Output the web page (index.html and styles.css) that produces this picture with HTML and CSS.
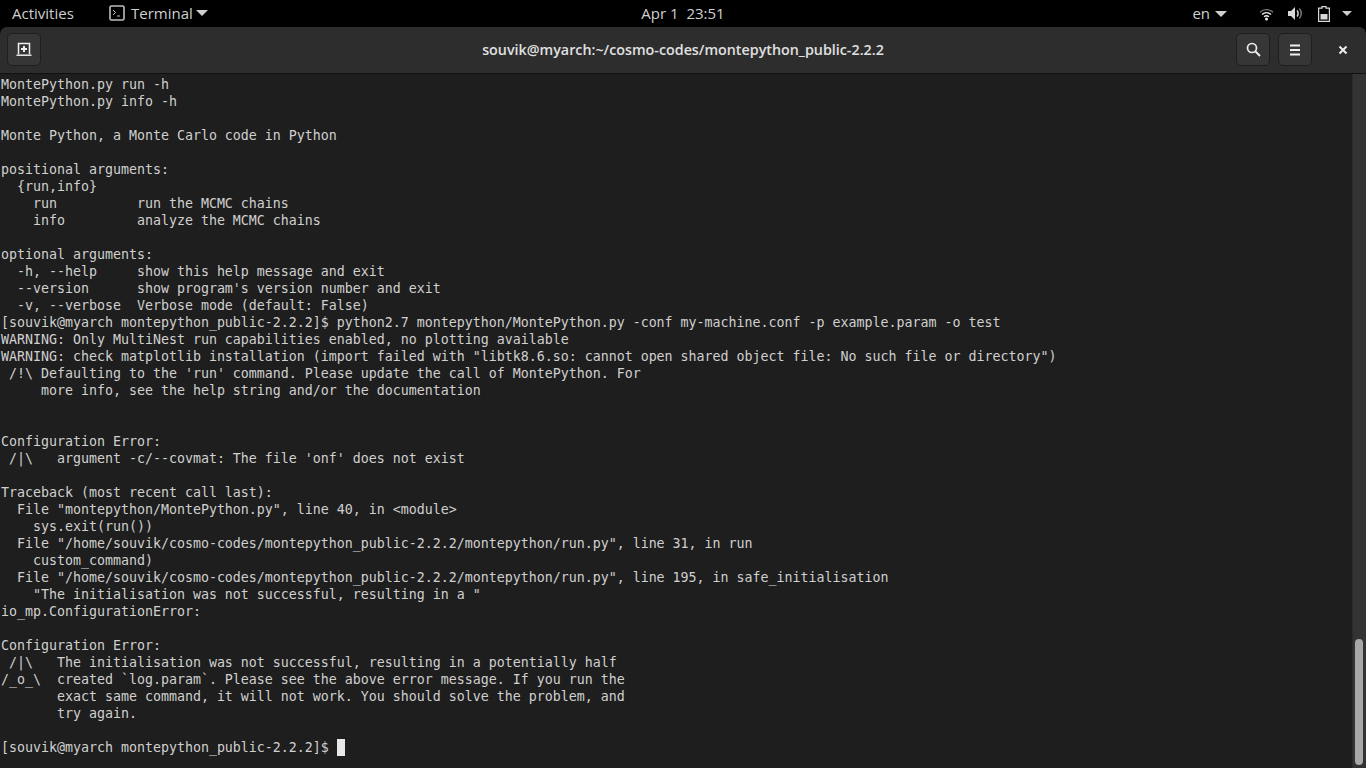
FILE: index.html
```html
<!DOCTYPE html>
<html lang="en">
<head>
<meta charset="utf-8">
<title>Terminal</title>
<link rel="stylesheet" href="styles.css">
</head>
<body>
<div class="topbar">
  <div class="tb-left">
    <span class="activities">Activities</span>
    <span class="appmenu">
      <svg class="appicon" width="16" height="16" viewBox="0 0 16 16"><rect x="1" y="1" width="14" height="14" rx="1.5" fill="none" stroke="#bdbdbd" stroke-width="1.6"/><path d="M4 5l2.5 2.5L4 10M8 11h3" fill="none" stroke="#bdbdbd" stroke-width="1"/></svg>
      <span>Terminal</span>
      <span class="caret app-caret"></span>
    </span>
  </div>
  <div class="clock">Apr 1&nbsp;&nbsp;23:51</div>
  <div class="tb-right">
    <span class="lang">en</span><span class="caret lang-caret"></span>
    <svg class="wifi" width="15" height="14" viewBox="0 0 16 14"><path d="M1 5.2C5 1.4 11 1.4 15 5.2" fill="none" stroke="#777" stroke-width="1.5"/><path d="M3.2 7.6C6 5 10 5 12.8 7.6" fill="none" stroke="#eee" stroke-width="1.5"/><path d="M5.4 10C7 8.7 9 8.7 10.6 10" fill="none" stroke="#eee" stroke-width="1.5"/><circle cx="8" cy="12.3" r="1.6" fill="#eee"/></svg>
    <svg class="vol" width="16" height="15" viewBox="0 0 16 15"><path d="M1 5h3l4-4v13l-4-4H1z" fill="#d8d8d8"/><path d="M10 4.5c1.5 1.5 1.5 4.5 0 6" fill="none" stroke="#d8d8d8" stroke-width="1.5"/><path d="M12.3 2.5c2.6 2.8 2.6 7.2 0 10" fill="none" stroke="#777" stroke-width="1.5"/></svg>
    <svg class="batt" width="12" height="16" viewBox="0 0 12 16"><path d="M4 .6h4v1.5h3.400v13.300H.6V2.100H4z" fill="none" stroke="#d8d8d8" stroke-width="1.2"/><rect x="2.5" y="8" width="7" height="5.5" fill="#d8d8d8"/></svg>
    <span class="caret sys-caret"></span>
  </div>
</div>
<div class="window">
  <header class="headerbar">
    <button class="hbtn" aria-label="New tab">
      <svg width="16" height="15" viewBox="0 0 16 15"><path d="M2.5 12V1.5h11V12" fill="none" stroke="#eee" stroke-width="1.5"/><path d="M0.5 13.2h15" stroke="#eee" stroke-width="1.5"/><path d="M8 4v6M5 7h6" stroke="#eee" stroke-width="2"/></svg>
    </button>
    <div class="title">souvik@myarch:~/cosmo-codes/montepython_public-2.2.2</div>
    <div class="hb-right">
      <button class="hbtn" aria-label="Search">
        <svg width="15" height="15" viewBox="0 0 15 15"><circle cx="6" cy="6" r="4.5" fill="none" stroke="#eee" stroke-width="1.7"/><path d="M9.5 9.5l4.5 4.5" stroke="#eee" stroke-width="2"/></svg>
      </button>
      <button class="hbtn" aria-label="Menu">
        <svg width="12" height="12" viewBox="0 0 12 12"><path d="M1 1.5h10M1 6h10M1 10.5h10" stroke="#eee" stroke-width="2"/></svg>
      </button>
      <button class="close" aria-label="Close">
        <svg width="10" height="10" viewBox="0 0 10 10"><path d="M1.5 1.5l7 7M8.5 1.500l-7 7" stroke="#eee" stroke-width="2"/></svg>
      </button>
    </div>
  </header>
  <div class="term">
    <pre class="screen">MontePython.py run -h
MontePython.py info -h

Monte Python, a Monte Carlo code in Python

positional arguments:
  {run,info}
    run          run the MCMC chains
    info         analyze the MCMC chains

optional arguments:
  -h, --help     show this help message and exit
  --version      show program's version number and exit
  -v, --verbose  Verbose mode (default: False)
[souvik@myarch montepython_public-2.2.2]$ python2.7 montepython/MontePython.py -conf my-machine.conf -p example.param -o test
WARNING: Only MultiNest run capabilities enabled, no plotting available
WARNING: check matplotlib installation (import failed with "libtk8.6.so: cannot open shared object file: No such file or directory")
 /!\ Defaulting to the 'run' command. Please update the call of MontePython. For
     more info, see the help string and/or the documentation


Configuration Error:
 /|\   argument -c/--covmat: The file 'onf' does not exist

Traceback (most recent call last):
  File "montepython/MontePython.py", line 40, in &lt;module&gt;
    sys.exit(run())
  File "/home/souvik/cosmo-codes/montepython_public-2.2.2/montepython/run.py", line 31, in run
    custom_command)
  File "/home/souvik/cosmo-codes/montepython_public-2.2.2/montepython/run.py", line 195, in safe_initialisation
    "The initialisation was not successful, resulting in a "
io_mp.ConfigurationError: 

Configuration Error:
 /|\   The initialisation was not successful, resulting in a potentially half
/_o_\  created `log.param`. Please see the above error message. If you run the
       exact same command, it will not work. You should solve the problem, and
       try again.

[souvik@myarch montepython_public-2.2.2]$ <span class="cursor"> </span></pre>
    <div class="scrollbar"><div class="thumb"></div></div>
  </div>
</div>
</body>
</html>
```

FILE: styles.css
```css
* { box-sizing: border-box; }
html, body { margin: 0; height: 100%; overflow: hidden; background: #000; }
body { width: 1366px; height: 768px; display: flex; flex-direction: column; font-family: "Open Sans", "Noto Sans", sans-serif; }
.topbar { height: 27px; flex: none; background: #000; color: #cfcfcf; font-size: 15px; line-height: 25px; display: grid; grid-template-columns: 1fr auto 1fr; align-items: center; }
.tb-left { display: flex; align-items: center; padding-left: 12px; }
.activities { width: 97px; margin-top: -1px; }
.appmenu { display: flex; align-items: center; gap: 6px; }
.appmenu > span:not(.caret) { margin-top: -1px; }
.appicon { display: block; margin-top: -1px; }
.caret { display: inline-block; width: 0; height: 0; border-left: 6px solid transparent; border-right: 6px solid transparent; border-top: 6px solid #cfcfcf; }
.app-caret { margin-left: -3px; margin-top: -2px; }
.clock { font-size: 15px; margin-top: -1px; }
.tb-right { display: flex; align-items: center; justify-content: flex-end; padding-right: 14px; }
.lang { margin-right: 5px; margin-top: -1px; }
.lang-caret { margin-right: 32px; }
.wifi { margin-right: 13px; }
.vol { margin-right: 15px; }
.batt { margin-right: 12px; }
.sys-caret { border-left-width: 5.500px; border-right-width: 5.500px; border-top-width: 5px; }
.window { flex: 1; display: flex; flex-direction: column; min-height: 0; }
.headerbar { height: 47px; flex: none; background: #2d2d2d; border-bottom: 1px solid #111; border-radius: 7px 7px 0 0; display: grid; grid-template-columns: 1fr auto 1fr; align-items: center; padding: 0 6px 1px 7px; color: #e8e8e8; }
.hbtn { width: 34px; height: 33px; padding: 0; display: flex; align-items: center; justify-content: center; background: #363636; border: 1px solid #1e1e1e; border-radius: 5px; }
.title { font-size: 14.3px; font-weight: 600; color: #e0e0e0; margin-left: -1px; }
.hb-right { display: flex; align-items: center; justify-content: flex-end; gap: 8px; }
.close { width: 34px; height: 33px; padding: 0; display: flex; align-items: center; justify-content: center; background: none; border: 0; margin-left: 6px; }
.term { flex: 1; display: flex; min-height: 0; background: #1e1e1e; }
.screen { flex: 1; margin: 0; padding: 2px 0 0 1px; font-family: "DejaVu Sans Mono", "Liberation Mono", monospace; font-size: 13.3px; line-height: 17px; letter-spacing: -0.01px; color: #d0d0d0; overflow: hidden; }
.cursor { display: inline-block; width: 8px; height: 17px; background: #e8e8e8; vertical-align: top; }
.scrollbar { width: 14px; flex: none; background: #333; border-left: 1px solid #2a2a2a; padding: 565px 3px 0 2px; }
.thumb { width: 8px; height: 126px; background: #a8a8a8; border-radius: 4px; }
```
